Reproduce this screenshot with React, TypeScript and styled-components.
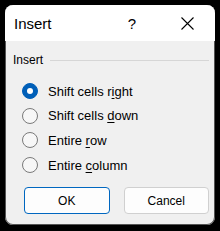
import React, { useState } from "react";
import styled, { createGlobalStyle } from "styled-components";

const GlobalStyle = createGlobalStyle`
  html, body {
    margin: 0;
    padding: 0;
    background: #000;
  }
  body {
    font-family: "Segoe UI", "Liberation Sans", Arial, sans-serif;
  }
`;

const Screen = styled.div`
  width: 220px;
  height: 231px;
  padding: 5px;
  box-sizing: border-box;
  background: #000;
`;

const Dialog = styled.div`
  width: 210px;
  height: 220px;
  border-radius: 8px;
  overflow: hidden;
  background: #f0f0f0;
  display: flex;
  flex-direction: column;
  box-shadow: inset 0 0 0 1px #555;
`;

const TitleBar = styled.div`
  height: 36px;
  flex-shrink: 0;
  background: #fff;
  display: flex;
  align-items: center;
  padding-left: 9px;
`;

const Title = styled.span`
  flex: 1;
  font-size: 15px;
  color: #000;
`;

const HelpButton = styled.span`
  width: 36px;
  text-align: center;
  font-size: 15px;
  color: #000;
`;

const CloseButton = styled.span`
  width: 46px;
  margin-left: 14px;
  margin-right: 5px;
  display: flex;
  justify-content: center;
  align-items: center;
`;

const Body = styled.div`
  flex: 1;
  display: flex;
  flex-direction: column;
  padding: 8px 6px 0 8px;
`;

const GroupHeader = styled.div`
  display: flex;
  align-items: center;
  height: 22px;
`;

const GroupLabel = styled.span`
  font-size: 12px;
  color: #000;
`;

const GroupLine = styled.div`
  flex: 1;
  height: 1px;
  margin-left: 7px;
  background: #d6d6d6;
`;

const RadioList = styled.div`
  display: flex;
  flex-direction: column;
  padding: 8px 0 0 9px;
`;

const RadioRow = styled.label`
  display: flex;
  align-items: center;
  height: 24.6px;
  font-size: 13px;
  color: #000;
  cursor: pointer;
`;

const RadioCircle = styled.span<{ $checked: boolean }>`
  width: 16px;
  height: 16px;
  box-sizing: border-box;
  border-radius: 50%;
  margin-right: 10px;
  display: flex;
  align-items: center;
  justify-content: center;
  background: ${(p) => (p.$checked ? "#005fb8" : "#f7f7f7")};
  border: 1px solid ${(p) => (p.$checked ? "#005fb8" : "#7a7a7a")};
  &::after {
    content: "";
    display: ${(p) => (p.$checked ? "block" : "none")};
    width: 6px;
    height: 6px;
    border-radius: 50%;
    background: #fff;
  }
`;

const Key = styled.span`
  text-decoration: underline;
  text-underline-offset: 2px;
`;

const ButtonRow = styled.div`
  display: flex;
  gap: 14px;
  padding: 10px 0 0 11px;
`;

const Button = styled.button<{ $primary?: boolean }>`
  width: 86px;
  height: 27px;
  box-sizing: border-box;
  border-radius: 4px;
  background: #fdfdfd;
  border: 1px solid ${(p) => (p.$primary ? "#0067c0" : "#d0d0d0")};
  font-family: inherit;
  font-size: 12px;
  color: #000;
  padding: 0;
`;

const options = [
  { pre: "Shift cells r", key: "i", post: "ght" },
  { pre: "Shift cells ", key: "d", post: "own" },
  { pre: "Entire ", key: "r", post: "ow" },
  { pre: "Entire ", key: "c", post: "olumn" },
];

export default function App() {
  const [selected, setSelected] = useState(0);
  return (
    <Screen>
      <GlobalStyle />
      <Dialog>
        <TitleBar>
          <Title>Insert</Title>
          <HelpButton>?</HelpButton>
          <CloseButton>
            <svg width="13" height="13" viewBox="0 0 13 13">
              <path d="M0.5 0.5 L12.5 12.5 M12.5 0.5 L0.5 12.5" stroke="#000" strokeWidth="1.1" />
            </svg>
          </CloseButton>
        </TitleBar>
        <Body>
          <GroupHeader>
            <GroupLabel>Insert</GroupLabel>
            <GroupLine />
          </GroupHeader>
          <RadioList>
            {options.map((o, i) => (
              <RadioRow key={i} onClick={() => setSelected(i)}>
                <RadioCircle $checked={selected === i} />
                <span>
                  {o.pre}
                  <Key>{o.key}</Key>
                  {o.post}
                </span>
              </RadioRow>
            ))}
          </RadioList>
          <ButtonRow>
            <Button $primary>OK</Button>
            <Button>Cancel</Button>
          </ButtonRow>
        </Body>
      </Dialog>
    </Screen>
  );
}
